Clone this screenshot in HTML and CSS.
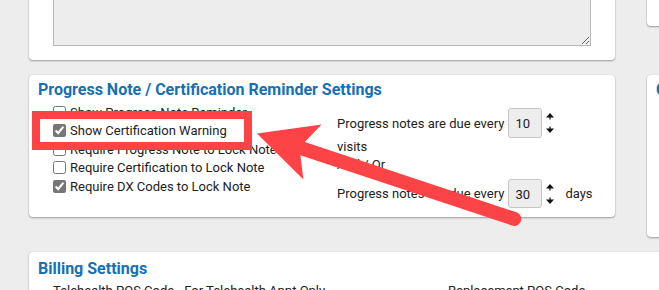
FILE: index.html
```html
<!DOCTYPE html>
<html>
<head>
<meta charset="utf-8">
<link rel="stylesheet" href="styles.css">
</head>
<body>
<div class="page">
  <div class="grid">
    <section class="card card-notes">
      <textarea class="notes"></textarea>
    </section>
    <section class="card card-side card-side-top"></section>

    <section class="card card-progress">
      <h2 class="card-title">Progress Note / Certification Reminder Settings</h2>
      <div class="progress-body">
        <div class="checks">
          <label class="check"><input type="checkbox"><span>Show Progress Note Reminder</span></label>
          <label class="check check-highlight"><input type="checkbox" checked><span>Show Certification Warning</span></label>
          <label class="check"><input type="checkbox"><span>Require Progress Note to Lock Note</span></label>
          <label class="check"><input type="checkbox"><span>Require Certification to Lock Note</span></label>
          <label class="check"><input type="checkbox" checked><span>Require DX Codes to Lock Note</span></label>
        </div>
        <div class="due">
          <div class="due-row">
            <span>Progress notes are due every</span>
            <span class="num">10</span>
            <svg class="spin" viewBox="0 0 10 22" width="10" height="22"><path d="M1 5.5 L5 1 L9 5.5 Z" fill="#111"/><path d="M5 5 V7.5" stroke="#111" stroke-width="1.2"/><path d="M5 14.5 V17" stroke="#111" stroke-width="1.2"/><path d="M1 16.5 L9 16.5 L5 21 Z" fill="#111"/></svg>
          </div>
          <div class="due-text">visits</div>
          <div class="due-text">And / Or</div>
          <div class="due-row due-row-2">
            <span>Progress notes are due every</span>
            <span class="num">30</span>
            <svg class="spin" viewBox="0 0 10 22" width="10" height="22"><path d="M1 5.5 L5 1 L9 5.5 Z" fill="#111"/><path d="M5 5 V7.5" stroke="#111" stroke-width="1.2"/><path d="M5 14.5 V17" stroke="#111" stroke-width="1.2"/><path d="M1 16.5 L9 16.5 L5 21 Z" fill="#111"/></svg>
            <span class="unit">days</span>
          </div>
        </div>
      </div>
    </section>
    <section class="card card-side card-side-mid">
      <h2 class="card-title">Calendar Settings</h2>
    </section>

    <section class="card card-billing">
      <h2 class="card-title card-title-billing">Billing Settings</h2>
      <div class="billing-row">
        <span class="billing-label">Telehealth POS Code - For Telehealth Appt Only</span>
        <span class="billing-label billing-label-right">Replacement POS Code</span>
      </div>
    </section>
  </div>

  <div class="callout"></div>
  <svg class="arrow" viewBox="0 0 659 290" width="659" height="290">
    <path d="M257 133.5 L321.6 124.4 L304.8 142 L517.2 212.6 A7 7 0 0 1 512.8 225.8 L300.4 155.2 L303.4 179.4 Z" fill="#fc4447"/>
  </svg>
</div>
</body>
</html>
```
FILE: styles.css
```css
html, body {
  margin: 0;
  padding: 0;
  background: #ededed;
  overflow: hidden;
}
body {
  width: 659px;
  height: 290px;
  font-family: Roboto, "Liberation Sans", sans-serif;
  font-size: 13px;
  color: #222;
}
.page {
  position: relative;
  width: 659px;
  height: 290px;
  overflow: hidden;
}
.grid {
  display: grid;
  grid-template-columns: 586px 300px;
  column-gap: 32px;
  row-gap: 15px;
  align-items: start;
  margin-top: -78px;
  padding-left: 29px;
}
.card {
  background: #fff;
  border-radius: 4px;
  box-shadow: 0 1px 2px rgba(0,0,0,0.35), 0 0 1px rgba(0,0,0,0.15);
  box-sizing: border-box;
}
.card-notes {
  padding: 24px 24px 14px 24px;
}
.notes {
  display: block;
  width: 538px;
  height: 100px;
  box-sizing: border-box;
  background: #ededed;
  border: 1px solid #b9b9b9;
  border-radius: 0;
  margin: 0;
}
.card-side-top {
  height: 104px;
}
.card-side-mid {
  height: 162px;
  padding: 5px 9px;
}
.card-title {
  margin: 0;
  font-size: 16px;
  line-height: 20px;
  font-weight: 700;
  color: #1570b5;
  white-space: nowrap;
}
.card-progress {
  padding: 5px 9px 9px 9px;
}
.progress-body {
  display: grid;
  grid-template-columns: 284px 1fr;
  padding-left: 15px;
  margin-top: 3px;
}
.checks {
  display: flex;
  flex-direction: column;
}
.check {
  display: flex;
  align-items: center;
  height: 18.5px;
  gap: 4px;
  white-space: nowrap;
}
.check input {
  width: 13px;
  height: 13px;
  margin: 0;
  accent-color: #767676;
}
.check-highlight {
  position: relative;
  z-index: 2;
}
.due {
  padding-top: 5px;
}
.due-row {
  display: flex;
  align-items: center;
  height: 30px;
  white-space: nowrap;
}
.due-row-2 {
  margin-top: 5px;
  height: 29px;
}
.num {
  width: 34px;
  height: 100%;
  box-sizing: border-box;
  margin-left: 4px;
  padding-left: 6px;
  padding-top: 1px;
  display: flex;
  align-items: center;
  background: #ededed;
  border: 1px solid #c6c6c6;
  border-radius: 3px;
}
.spin {
  margin-left: 3px;
}
.unit {
  margin-left: 10px;
}
.due-text {
  line-height: 18px;
}
.card-billing {
  grid-column: 1 / -1;
  height: 80px;
  padding: 7px 9px;
}
.billing-row {
  display: flex;
  padding-left: 15px;
  margin-top: 4px;
}
.billing-label {
  width: 395px;
  white-space: nowrap;
}
.callout {
  position: absolute;
  left: 32px;
  top: 111px;
  width: 220px;
  height: 39px;
  box-sizing: border-box;
  border: 8px solid #fc4447;
  background: #fff;
  z-index: 1;
}
.arrow {
  position: absolute;
  left: 0;
  top: 0;
  z-index: 3;
}
```
